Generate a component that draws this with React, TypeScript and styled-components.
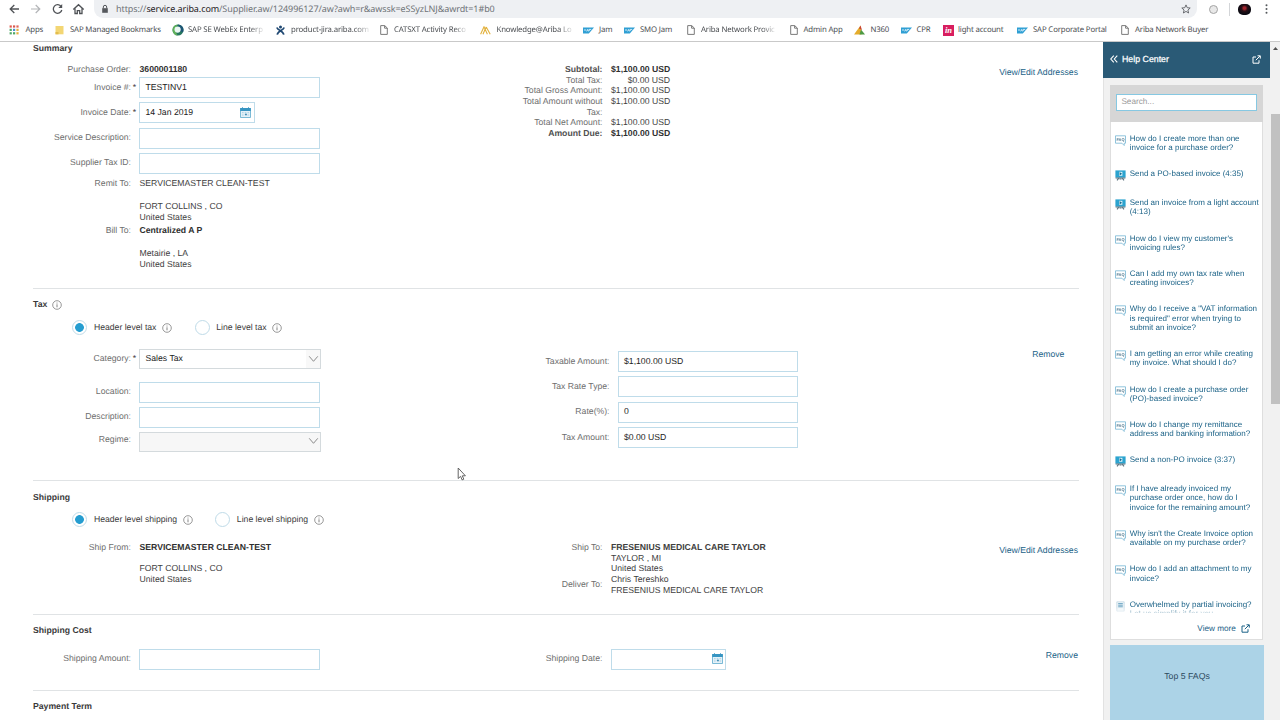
import React from "react";
import styled, { createGlobalStyle, css } from "styled-components";

const ui = `"Liberation Sans", Arial, sans-serif`;
const chrome = `"Noto Sans", "Open Sans", sans-serif`;

const Global = createGlobalStyle`
  * { box-sizing: border-box; }
  html, body { margin: 0; height: 720px; overflow: hidden; background: #fff; }
  body { font-family: ${ui}; font-size: 8.67px; line-height: 10.67px; color: #3c3c3c; text-rendering: geometricPrecision; }
  svg { display: block; flex: none; }
`;

const Window = styled.div`
  width: 1280px;
  height: 720px;
  display: flex;
  flex-direction: column;
  overflow: hidden;
`;

/* ---------- browser frame ---------- */
const Toolbar = styled.div`
  height: 18px;
  flex: none;
  display: flex;
  align-items: center;
  padding-left: 8px;
  background: #fff;
`;
const NavIcons = styled.div`
  display: flex;
  gap: 8.3px;
  width: 86px;
`;
const Omnibox = styled.div`
  width: 1103px;
  height: 18px;
  display: flex;
  align-items: center;
  padding: 0 6px 0 6px;
  border-radius: 0 0 9px 9px;
  background: #eef0f3;
`;
const Url = styled.div`
  margin-left: 6px;
  flex: 1;
  font: 9px/16px ${chrome};
  letter-spacing: -0.08px;
  color: #6f7377;
  white-space: nowrap;
  b { font-weight: 400; color: #1f2123; }
`;
const Extensions = styled.div`
  flex: 1;
  display: flex;
  align-items: center;
  padding-left: 12px;
`;
const Orb = styled.i`
  width: 9px;
  height: 9px;
  border-radius: 50%;
  background: #e8e8e8;
  border: 1.5px solid #a4a4a4;
`;
const Divider = styled.i`
  width: 1px;
  height: 13px;
  margin: 0 8px 0 11px;
  background: #d3d5d8;
`;
const Avatar = styled.i`
  width: 13px;
  height: 11px;
  margin-right: 14px;
  border-radius: 5px;
  background: radial-gradient(circle at 50% 38%, #a3252e 0 12%, #2a0f16 32%, #0c0a12 60%);
`;
const BookmarkBar = styled.div`
  height: 24px;
  flex: none;
  display: flex;
  align-items: center;
  padding: 1px 0 0 9px;
  border-bottom: 1px solid #c9c9c9;
  background: #fff;
`;
const Bookmark = styled.div<{ $w: number; $gap: number; $fade?: boolean }>`
  width: ${(p) => p.$w}px;
  flex: none;
  display: flex;
  align-items: center;
  span {
    margin-left: ${(p) => p.$gap}px;
    white-space: nowrap;
    font: 7.8px/14px ${chrome};
    letter-spacing: -0.16px;
    color: #4b4e52;
    ${(p) => p.$fade && css`mask-image: linear-gradient(90deg, #000 82%, rgba(0, 0, 0, 0.15) 100%);`}
  }
`;

/* ---------- page ---------- */
const Body = styled.div`
  flex: 1;
  min-height: 0;
  display: flex;
`;
const Main = styled.main`
  width: 1103px;
  flex: none;
  padding: 0 24px 0 33px;
  overflow: hidden;
`;
const Section = styled.section<{ $h: number; $top: number }>`
  height: ${(p) => p.$h}px;
  padding-top: ${(p) => p.$top}px;
  border-bottom: 1px solid #e0e3e5;
`;
const Title = styled.h2`
  margin: 0;
  display: flex;
  align-items: center;
  gap: 5px;
  height: 12px;
  font-size: 8.67px;
  font-weight: 700;
  color: #3a3a3a;
`;
const Columns = styled.div<{ $top: number }>`
  display: flex;
  align-items: flex-start;
  padding-top: ${(p) => p.$top}px;
`;
const Left = styled.div`
  width: 465px;
`;
const Middle = styled.div<{ $top?: number }>`
  width: 320px;
  padding-top: ${(p) => p.$top ?? 0}px;
`;
const Actions = styled.div<{ $top: number; $right?: number }>`
  flex: 1;
  padding: ${(p) => p.$top}px ${(p) => p.$right ?? 1}px 0 0;
  text-align: right;
`;
const Link = styled.a`
  color: #1b6287;
  white-space: nowrap;
`;
const Row = styled.div<{ $mt?: number; $center?: boolean }>`
  margin-top: ${(p) => p.$mt ?? 0}px;
  display: flex;
  align-items: ${(p) => (p.$center ? "center" : "flex-start")};
`;
const Label = styled.div<{ $w: number; $req?: boolean; $bold?: boolean; $lift?: number }>`
  width: ${(p) => p.$w}px;
  margin-right: 8.5px;
  padding-bottom: ${(p) => p.$lift ?? 0}px;
  flex: none;
  position: relative;
  text-align: right;
  font-weight: ${(p) => (p.$bold ? 700 : 400)};
  color: ${(p) => (p.$bold ? "#505050" : "#6e6e6e")};
  ${(p) => p.$req && css`&::after { content: "*"; position: absolute; left: 100%; margin-left: 1.7px; color: #444; }`}
`;
const Value = styled.div<{ $bold?: boolean; $w?: number }>`
  font-weight: ${(p) => (p.$bold ? 700 : 400)};
  color: ${(p) => (p.$bold ? "#2f2f2f" : "#3e3e3e")};
  white-space: nowrap;
  ${(p) => p.$w && css`width: ${p.$w}px; text-align: right;`}
`;
const Field = styled.div<{ $w?: number }>`
  width: ${(p) => p.$w ?? 180.5}px;
  height: 21px;
  margin-left: -0.5px;
  display: flex;
  align-items: center;
  justify-content: space-between;
  padding: 0 2.5px 1px 5.5px;
  border: 1px solid #bfdcea;
  background: #fff;
  color: #222;
`;
const Select = styled(Field)<{ $off?: boolean }>`
  width: 181.5px;
  height: 20px;
  padding-right: 1px;
  border-color: #d4dadd;
  background: ${(p) => (p.$off ? "#f7f7f7" : "linear-gradient(90deg, #fff 0 166px, #f8f8f8 166px)")};
`;
const Radios = styled.div<{ $top: number; $gap: number }>`
  display: flex;
  align-items: center;
  height: 15px;
  margin-top: ${(p) => p.$top}px;
  padding-left: 39.4px;
  color: #3c3c3c;
  > * + * { margin-left: ${(p) => p.$gap}px; }
`;
const RadioOption = styled.label`
  display: flex;
  align-items: center;
  span { margin: 0 5.6px 0 6.5px; }
`;
const RadioDot = styled.i<{ $on?: boolean }>`
  width: 15px;
  height: 15px;
  border-radius: 50%;
  border: 1px solid #bfdbe8;
  background: ${(p) => (p.$on ? "radial-gradient(circle, #259dd0 0 4px, #fff 4.7px)" : "#fff")};
`;
const Cursor = styled.svg`
  position: absolute;
  left: 457px;
  top: 467px;
`;

/* ---------- help panel ---------- */
const Help = styled.aside`
  width: 167px;
  flex: none;
  border-left: 1px solid #e2e2e2;
  background: #f1f1f1;
`;
const HelpHead = styled.div`
  height: 36px;
  margin-left: -1px;
  display: flex;
  align-items: center;
  padding: 0 9px 2px 7px;
  background: #2a5a76;
  color: #fff;
  font-size: 8.8px;
  -webkit-text-stroke: 0.25px #fff;
  span { flex: 1; margin-left: 4px; }
`;
const Card = styled.div`
  width: 153px;
  height: 555px;
  margin: 7px 0 0 6.4px;
  border: 1px solid #dedede;
  border-top: 0;
  background: #fff;
`;
const SearchArea = styled.div`
  height: 37px;
  margin: 0 -1px;
  padding: 9px 6px 0;
  background: #d6d6d6;
`;
const SearchInput = styled.div`
  height: 17px;
  padding: 2px 4px;
  border: 1px solid #86c8e2;
  background: #fff;
  color: #999;
  font-size: 8.2px;
`;
const Topics = styled.div`
  height: 491px;
  overflow: hidden;
  padding: 12px 0 0 3.5px;
  mask-image: linear-gradient(#000 485px, rgba(0, 0, 0, 0.25) 491px);
`;
const Topic = styled.div`
  min-height: 12px;
  margin-bottom: 16.75px;
  display: flex;
  align-items: flex-start;
  font-size: 8px;
  line-height: 9.33px;
  color: #1b6287;
  white-space: nowrap;
  svg { margin: 1px 3.8px 0 0; }
`;
const More = styled.div`
  display: flex;
  justify-content: flex-end;
  align-items: center;
  gap: 5.5px;
  padding: 10.5px 12px 0 0;
  font-size: 8.2px;
  color: #1b6287;
`;
const FaqTile = styled.div`
  width: 154px;
  height: 80px;
  margin: 5px 0 0 6px;
  padding-top: 26px;
  background: #acd3e7;
  color: #2c4a60;
  text-align: center;
  font-size: 8.75px;
`;
const Scroll = styled.div`
  width: 10px;
  flex: none;
  background: #f1f1f1;
  svg { margin: 5px 0 0 3px; }
`;
const Thumb = styled.div`
  width: 9px;
  height: 290px;
  margin: 64px 0 0 1px;
  background: #c1c1c1;
`;

/* ---------- icons ---------- */
const Info = () => (
  <svg width="10" height="10" viewBox="0 0 10 10" fill="none" stroke="#777" strokeWidth=".75">
    <circle cx="5" cy="5" r="4.3" />
    <path d="M5 4.3v3M5 2.6v.9" strokeWidth=".9" />
  </svg>
);
const Calendar = () => (
  <svg width="11" height="11" viewBox="0 0 11 11">
    <path d="M.5 1.5h10v9H.5z" fill="#e4f1f8" stroke="#5ba9cc" strokeWidth=".8" />
    <path d="M.2 1h10.6v3H.2z" fill="#3795c2" />
    <path d="M2.5.3v1.5M8.5.3v1.5" stroke="#3795c2" />
    <path d="M2 5.7h1.6M4.7 5.7h1.6M2 8h1.6M7.5 8h1.6M7.5 5.7h1.6" stroke="#a4cfe3" />
    <path d="M4.9 6.7h2v1.6h-2z" fill="#438fb6" />
  </svg>
);
const Chevron = () => (
  <svg width="11" height="8" viewBox="0 0 11 8" fill="none" stroke="#808080" strokeWidth=".9">
    <path d="M1.2 1.3 5.5 6.3 9.8 1.3" />
  </svg>
);
const External = ({ s = 9, c = "#1b6287" }) => (
  <svg width={s} height={s} viewBox="0 0 9 9" fill="none" stroke={c} strokeWidth="1">
    <path d="M4 2H1v6.2h6V5.2M3.8 5.2 8 1M5.5.8h2.8v2.8" />
  </svg>
);
const FaqIcon = () => (
  <svg width="11" height="11" viewBox="0 0 11 11">
    <path d="M.5.8h10v7.4H9.2v2.3L6.9 8.2H.5z" fill="#fff" stroke="#75b5d3" strokeWidth=".8" />
    <text x="5.5" y="6.1" textAnchor="middle" fontSize="4" fontWeight="700" fill="#52798f">FAQ</text>
  </svg>
);
const VideoIcon = () => (
  <svg width="11" height="11" viewBox="0 0 11 11">
    <path d="M.4.4h10.2v7.2H.4z" fill="#2ba3cf" />
    <path d="M4 1.8h3.4v4H4z" fill="#d8f0f8" />
    <path d="m4.6 2.1 2.4 1.7-2.4 1.7z" fill="#176c91" />
    <path d="M.6 8h9.8" stroke="#4c6c7c" strokeWidth="1" />
    <path d="M3.8 8.2 2 10.4M7.2 8.2 9 10.4M4.5 9h2" stroke="#5f7580" strokeWidth="1.2" />
  </svg>
);
const DocIcon = () => (
  <svg width="11" height="11" viewBox="0 0 11 11">
    <path d="M1.8.8h7.4v9.4H1.8z" fill="#eef5f9" stroke="#bcd3df" strokeWidth=".7" />
    <path d="M3.2 2.6h4.6M3.2 4.2h4.6M3.2 5.8h4.6" stroke="#5f9dbd" strokeWidth=".9" />
  </svg>
);
const AppsIcon = () => (
  <svg width="10" height="10" viewBox="0 0 10 10">
    {["#e2574c", "#d7584d", "#e0655a", "#4fa866", "#4b8fd0", "#e3b143", "#4fa866", "#4fa866", "#e3b143"].map((c, i) => (
      <rect key={i} x={0.6 + (i % 3) * 3.4} y={0.4 + Math.floor(i / 3) * 3.4} width="2.2" height="2.2" fill={c} />
    ))}
  </svg>
);
const FolderIcon = () => (
  <svg width="9" height="10" viewBox="0 0 9 10">
    <path d="M.5 1h8v8.3h-8z" fill="#f3d674" />
    <path d="M.5 7h3v2.3h-3z" fill="#e3bd4d" />
  </svg>
);
const WebexIcon = () => (
  <svg width="12" height="12" viewBox="0 0 12 12">
    <circle cx="6" cy="6" r="5.5" fill="#26765f" />
    <path d="M6 .5a5.5 5.5 0 0 0 0 11C3 9 3 3 6 .5" fill="#5fb05a" />
    <path d="M6 .5a5.5 5.5 0 0 1 5 7.8L8 7z" fill="#1d5575" />
    <circle cx="5.6" cy="5.6" r="3.1" fill="#eaf7f3" />
  </svg>
);
const JiraIcon = () => (
  <svg width="9" height="11" viewBox="0 0 9 11" fill="none" stroke="#1f4872" strokeWidth="1.7">
    <circle cx="4.5" cy="2" r="1.5" fill="#1f4872" stroke="none" />
    <path d="M.8 2.5C2 6 7 5 7.8 9.7M8.2 2.5C7 6 2 5 1.2 9.7" />
  </svg>
);
const PageIcon = () => (
  <svg width="8" height="10" viewBox="0 0 8 10" fill="#fff" stroke="#6c6c6c" strokeWidth=".9">
    <path d="M.7.6h4L7.3 3v6.4H.7zM4.6.7v2.5h2.6" />
  </svg>
);
const KnowledgeIcon = () => (
  <svg width="11" height="9" viewBox="0 0 11 9" fill="none" stroke="#e2b13c" strokeWidth="1.1">
    <path d="M.6 8.2 4 .8l3.4 7.4M3 8.2 5 3.5M6.2.9l4 7.3M6.2 1 5.4 3" />
  </svg>
);
const SapIcon = () => (
  <svg width="11" height="7" viewBox="0 0 11 7">
    <path d="M0 .5h11L5.8 6.5H0z" fill="#2f9fd4" />
    <path d="M1 3h2.2M3.7 4.4l1-2 .8 2M6.2 4V2.4h2" stroke="#e3f4fb" strokeWidth=".9" fill="none" />
  </svg>
);
const N360Icon = () => (
  <svg width="11" height="10" viewBox="0 0 11 10">
    <path d="M0 9.5 6.5.5l1 9z" fill="#e5ac2c" />
    <path d="M5 3.5 6.5.5 8 5z" fill="#c94433" />
    <path d="M5.5 9.5 7 4.5l4 5z" fill="#4d9a43" />
  </svg>
);
const InIcon = () => (
  <svg width="11" height="11" viewBox="0 0 11 11">
    <rect width="11" height="11" fill="#d81e5f" />
    <text x="5.5" y="8.3" textAnchor="middle" fontSize="8.5" fontStyle="italic" fontWeight="700" fontFamily="Liberation Serif" fill="#fff">in</text>
  </svg>
);

const bookmarks: [React.FC, string, number, number, boolean?][] = [
  [AppsIcon, "Apps", 46, 6.5],
  [FolderIcon, "SAP Managed Bookmarks", 117, 6],
  [WebexIcon, "SAP SE WebEx Enterp", 104, 4, true],
  [JiraIcon, "product-jira.ariba.com", 104, 6, true],
  [PageIcon, "CATSXT Activity Reco", 100, 6, true],
  [KnowledgeIcon, "Knowledge@Ariba Lo", 103, 5.5, true],
  [SapIcon, "Jam", 41, 5],
  [SapIcon, "SMO Jam", 62.5, 5],
  [PageIcon, "Ariba Network Provic", 103, 6.5, true],
  [PageIcon, "Admin App", 64.5, 6],
  [N360Icon, "N360", 46.5, 5.5],
  [SapIcon, "CPR", 42, 5],
  [InIcon, "light account", 74.5, 4.5],
  [SapIcon, "SAP Corporate Portal", 104, 5],
  [PageIcon, "Ariba Network Buyer", 100, 6],
];

const topics: [React.FC, string[]][] = [
  [FaqIcon, ["How do I create more than one", "invoice for a purchase order?"]],
  [VideoIcon, ["Send a PO-based invoice (4:35)"]],
  [VideoIcon, ["Send an invoice from a light account", "(4:13)"]],
  [FaqIcon, ["How do I view my customer's", "invoicing rules?"]],
  [FaqIcon, ["Can I add my own tax rate when", "creating invoices?"]],
  [FaqIcon, ["Why do I receive a \"VAT information", "is required\" error when trying to", "submit an invoice?"]],
  [FaqIcon, ["I am getting an error while creating", "my invoice. What should I do?"]],
  [FaqIcon, ["How do I create a purchase order", "(PO)-based invoice?"]],
  [FaqIcon, ["How do I change my remittance", "address and banking information?"]],
  [VideoIcon, ["Send a non-PO invoice (3:37)"]],
  [FaqIcon, ["If I have already invoiced my", "purchase order once, how do I", "invoice for the remaining amount?"]],
  [FaqIcon, ["Why isn't the Create Invoice option", "available on my purchase order?"]],
  [FaqIcon, ["How do I add an attachment to my", "invoice?"]],
  [DocIcon, ["Overwhelmed by partial invoicing?", "Let us simplify it for you"]],
];

const totals: [React.ReactNode, string, boolean?][] = [
  ["Subtotal:", "$1,100.00 USD", true],
  ["Total Tax:", "$0.00 USD"],
  ["Total Gross Amount:", "$1,100.00 USD"],
  [<>Total Amount without<br />Tax:</>, "$1,100.00 USD"],
  ["Total Net Amount:", "$1,100.00 USD"],
  ["Amount Due:", "$1,100.00 USD", true],
];

const Option = ({ label, on }: { label: string; on?: boolean }) => (
  <RadioOption><RadioDot $on={on} /><span>{label}</span><Info /></RadioOption>
);

export default function App() {
  return (
    <Window>
      <Global />
      <Toolbar>
        <NavIcons>
          <svg width="13" height="12" viewBox="0 0 13 12" fill="none" stroke="#4f5256" strokeWidth="1.3"><path d="M11 6H2.5M6.3 2 2.2 6l4.1 4" /></svg>
          <svg width="13" height="12" viewBox="0 0 13 12" fill="none" stroke="#b3b5b8" strokeWidth="1.2"><path d="M2 6h8.5M6.7 2l4.1 4-4.1 4" /></svg>
          <svg width="13" height="12" viewBox="0 0 13 12" fill="none" stroke="#4f5256" strokeWidth="1.3"><path d="M10.2 3.6A4.3 4.3 0 1 0 10.8 7" /><path d="M11.2 1v3.9H7.3z" fill="#4f5256" stroke="none" /></svg>
          <svg width="13" height="12" viewBox="0 0 13 12" fill="none" stroke="#4f5256" strokeWidth="1.3"><path d="M1.3 6.5 6.5 1.7l5.2 4.8M3 5.5v5h2.3V7.6h2.4v2.9H10v-5" /></svg>
        </NavIcons>
        <Omnibox>
          <svg width="10" height="10" viewBox="0 0 10 10"><path d="M2.2 4.2h5.6v4.6H2.2z" fill="#55585c" /><path d="M3.3 4.5V3a1.7 1.7 0 0 1 3.4 0v1.5" fill="none" stroke="#55585c" /></svg>
          <Url>https://<b>service.ariba.com</b>/Supplier.aw/124996127/aw?awh=r&amp;awssk=eSSyzLNJ&amp;awrdt=1#b0</Url>
          <svg width="10" height="10" viewBox="0 0 10 10" fill="none" stroke="#5d6064" strokeWidth=".9"><path d="m5 .9 1.2 2.8 3 .3-2.3 2 .7 3L5 7.4 2.4 9l.7-3L.8 4l3-.3z" /></svg>
        </Omnibox>
        <Extensions>
          <Orb /><Divider /><Avatar />
          <svg width="3" height="10" viewBox="0 0 3 10" fill="#55585c"><circle cx="1.5" cy="1.3" r="1" /><circle cx="1.5" cy="5" r="1" /><circle cx="1.5" cy="8.7" r="1" /></svg>
        </Extensions>
      </Toolbar>
      <BookmarkBar>
        {bookmarks.map(([Icon, text, w, gap, fade]) => (
          <Bookmark key={text} $w={w} $gap={gap} $fade={fade}><Icon /><span>{text}</span></Bookmark>
        ))}
      </BookmarkBar>

      <Body>
        <Main>
          <Section $h={247} $top={0}>
            <Title>Summary</Title>
            <Columns $top={10}>
              <Left>
                <Row><Label $w={98}>Purchase Order:</Label><Value $bold>3600001180</Value></Row>
                <Row $mt={2.3} $center><Label $w={98} $req $lift={1}>Invoice #:</Label><Field>TESTINV1</Field></Row>
                <Row $mt={4.3} $center><Label $w={98} $req $lift={1}>Invoice Date:</Label><Field $w={115.5}>14 Jan 2019<Calendar /></Field></Row>
                <Row $mt={4.3} $center><Label $w={98} $lift={2}>Service Description:</Label><Field /></Row>
                <Row $mt={4.3} $center><Label $w={98} $lift={2}>Supplier Tax ID:</Label><Field /></Row>
                <Row $mt={4.3}><Label $w={98}>Remit To:</Label><Value>SERVICEMASTER CLEAN-TEST</Value></Row>
                <Row $mt={12.4}><Label $w={98} /><Value>FORT COLLINS , CO<br />United States</Value></Row>
                <Row $mt={2.4}><Label $w={98}>Bill To:</Label><Value $bold>Centralized A P</Value></Row>
                <Row $mt={12.4}><Label $w={98} /><Value>Metairie , LA<br />United States</Value></Row>
              </Left>
              <Middle>
                {totals.map(([label, amount, bold], i) => (
                  <Row key={i}><Label $w={104.5} $bold={bold}>{label}</Label><Value $bold={bold} $w={59}>{amount}</Value></Row>
                ))}
              </Middle>
              <Actions $top={3}><Link>View/Edit Addresses</Link></Actions>
            </Columns>
          </Section>

          <Section $h={192} $top={9.5}>
            <Title>Tax <Info /></Title>
            <Radios $top={9.5} $gap={22.6}><Option label="Header level tax" on /><Option label="Line level tax" /></Radios>
            <Columns $top={14}>
              <Left>
                <Row $center><Label $w={98} $req $lift={2}>Category:</Label><Select>Sales Tax<Chevron /></Select></Row>
                <Row $mt={12.7} $center><Label $w={98} $lift={2}>Location:</Label><Field /></Row>
                <Row $mt={4.3} $center><Label $w={98} $lift={1.4}>Description:</Label><Field /></Row>
                <Row $mt={4} $center><Label $w={98} $lift={5}>Regime:</Label><Select $off><span /><Chevron /></Select></Row>
              </Left>
              <Middle $top={2}>
                <Row $center><Label $w={111.5} $lift={1}>Taxable Amount:</Label><Field>$1,100.00 USD</Field></Row>
                <Row $mt={4.3} $center><Label $w={111.5} $lift={1}>Tax Rate Type:</Label><Field /></Row>
                <Row $mt={4.3} $center><Label $w={111.5} $lift={1}>Rate(%):</Label><Field>0</Field></Row>
                <Row $mt={4.3} $center><Label $w={111.5} $lift={1}>Tax Amount:</Label><Field>$0.00 USD</Field></Row>
              </Middle>
              <Actions $top={0} $right={14.6}><Link>Remove</Link></Actions>
            </Columns>
          </Section>

          <Section $h={134} $top={10}>
            <Title>Shipping</Title>
            <Radios $top={9} $gap={22.6}><Option label="Header level shipping" on /><Option label="Line level shipping" /></Radios>
            <Columns $top={15}>
              <Left>
                <Row><Label $w={98}>Ship From:</Label><Value $bold>SERVICEMASTER CLEAN-TEST</Value></Row>
                <Row $mt={10.7}><Label $w={98} /><Value>FORT COLLINS , CO<br />United States</Value></Row>
              </Left>
              <Middle>
                <Row><Label $w={104.5}>Ship To:</Label><Value><b>FRESENIUS MEDICAL CARE TAYLOR</b><br />TAYLOR , MI<br />United States</Value></Row>
                <Row $center><Label $w={104.5}>Deliver To:</Label><Value>Chris Tereshko<br />FRESENIUS MEDICAL CARE TAYLOR</Value></Row>
              </Middle>
              <Actions $top={3}><Link>View/Edit Addresses</Link></Actions>
            </Columns>
          </Section>

          <Section $h={76} $top={9.5}>
            <Title>Shipping Cost</Title>
            <Columns $top={12}>
              <Left><Row $center><Label $w={98} $lift={2}>Shipping Amount:</Label><Field /></Row></Left>
              <Middle><Row $center><Label $w={104.5} $lift={2}>Shipping Date:</Label><Field $w={115.5}><span /><Calendar /></Field></Row></Middle>
              <Actions $top={1}><Link>Remove</Link></Actions>
            </Columns>
          </Section>

          <Section $h={60} $top={9.5}>
            <Title>Payment Term</Title>
          </Section>
        </Main>

        <Help>
          <HelpHead>
            <svg width="8" height="8" viewBox="0 0 8 8" fill="none" stroke="#fff" strokeWidth="1.1"><path d="M3.8.7.8 4l3 3.3M7.3.7l-3 3.3 3 3.3" /></svg>
            <span>Help Center</span>
            <External c="#fff" />
          </HelpHead>
          <Card>
            <SearchArea><SearchInput>Search...</SearchInput></SearchArea>
            <Topics>
              {topics.map(([Icon, lines]) => (
                <Topic key={lines[0]}>
                  <Icon />
                  <div>{lines.map((l) => <div key={l}>{l}</div>)}</div>
                </Topic>
              ))}
            </Topics>
            <More>View more <External /></More>
          </Card>
          <FaqTile>Top 5 FAQs</FaqTile>
        </Help>
        <Scroll>
          <svg width="5" height="3" viewBox="0 0 5 3"><path d="M0 3 2.5 0 5 3z" fill="#505050" /></svg>
          <Thumb />
        </Scroll>
      </Body>
      <Cursor width="9" height="14" viewBox="0 0 9 14"><path d="M1.2 1v10.5l2.4-2.2 1.5 3.6 1.7-.7-1.5-3.4h3.1z" fill="#fff" stroke="#555" strokeWidth=".9" /></Cursor>
    </Window>
  );
}
